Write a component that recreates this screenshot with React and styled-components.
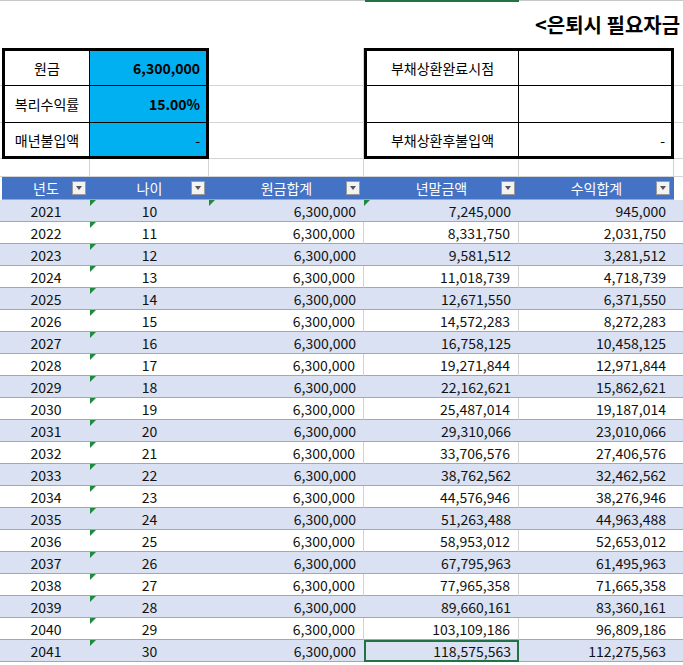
import React from "react";
import styled, { createGlobalStyle } from "styled-components";

const G = createGlobalStyle`
  body{margin:0;background:#fff;font-family:"Noto Sans CJK KR","Noto Sans",sans-serif;overflow:hidden;}
`;
const COLS = "2px 88px 119px 155px 155px 155px 9px";
const Sheet = styled.div`width:683px;height:665px;position:relative;overflow:hidden;`;
const TopLine = styled.div`height:1px;background:#c8c8c8;position:relative;`;
const Sel = styled.div`position:absolute;left:365px;width:154px;top:0;height:2px;background:#217346;`;
const TitleRow = styled.div`height:47px;display:flex;align-items:center;padding-left:535px;
  font-weight:700;font-size:20px;white-space:nowrap;color:#000;`;
const Grid = styled.div`display:grid;grid-template-columns:${COLS};`;
const Cell = styled.div`
  height:${p => p.h}px;box-sizing:border-box;display:flex;align-items:center;
  justify-content:${p => p.align || "center"};padding:0 6px;font-size:14px;color:#000;
  background:${p => p.bg || "transparent"};font-weight:${p => p.bold ? 700 : 400};
  border-right:${p => p.br || "1px solid #d4d4d4"};border-bottom:${p => p.bb || "1px solid #d4d4d4"};
  border-left:${p => p.bl || "none"};border-top:${p => p.bt || "none"};
  position:relative;white-space:nowrap;
`;
const Tri = styled.span`position:absolute;left:0;top:0;width:0;height:0;
  border-top:6px solid #1e8a3a;border-right:6px solid transparent;`;
const HeadCell = styled.div`height:23px;background:#4472c4;color:#fff;font-size:14px;display:flex;
  align-items:center;justify-content:center;position:relative;border-bottom:1px solid #8ea9db;box-sizing:border-box;`;
const Drop = styled.span`position:absolute;right:4px;top:4px;width:14px;height:14px;background:#f3f3f3;
  border:1px solid #9a9a9a;box-sizing:border-box;display:flex;align-items:center;justify-content:center;
  &:after{content:"";border-top:4px solid #555;border-left:3px solid transparent;border-right:3px solid transparent;}`;
const Row = styled.div`display:grid;grid-template-columns:${COLS};background:${p => p.alt ? "#d9e1f2" : "#fff"};`;
const D = styled.div`height:22px;box-sizing:border-box;border-bottom:1px solid #8ea9db;display:flex;align-items:center;
  justify-content:${p => p.align};padding:0 8px;font-size:14px;position:relative;color:#111;
  border-right:${p => p.sep ? "1px solid #d4d4d4" : "none"};
  outline:${p => p.sel ? "2px solid #217346" : "none"};outline-offset:-2px;`;

const fmt = n => n.toLocaleString("en-US");
const rows = [];
let v = 6300000;
for (let i = 0; i < 21; i++) {
  v = v * 1.15;
  const e = Math.round(v);
  rows.push([2021 + i, 10 + i, e, e - 6300000]);
}
const K = "3px solid #000";
const T = "1px solid #000";

export default function App() {
  return (
    <Sheet>
      <G />
      <TopLine><Sel /></TopLine>
      <TitleRow>&lt;은퇴시 필요자금</TitleRow>
      <Grid>
        <Cell h={38} br="none" />
        <Cell h={38} bt={K} bl={K} br={T} bb={T}>원금</Cell>
        <Cell h={38} bt={K} br={K} bb={T} bg="#00b0f0" align="flex-end" bold>6,300,000</Cell>
        <Cell h={38} />
        <Cell h={38} bt={K} bl={K} br={T} bb={T}>부채상환완료시점</Cell>
        <Cell h={38} bt={K} br={K} bb={T} />
        <Cell h={38} br="none" />

        <Cell h={37} br="none" />
        <Cell h={37} bl={K} br={T} bb={T}>복리수익률</Cell>
        <Cell h={37} br={K} bb={T} bg="#00b0f0" align="flex-end" bold>15.00%</Cell>
        <Cell h={37} />
        <Cell h={37} bl={K} br={T} bb={T} />
        <Cell h={37} br={K} bb={T} />
        <Cell h={37} br="none" />

        <Cell h={36} br="none" />
        <Cell h={36} bl={K} br={T} bb={K}>매년불입액</Cell>
        <Cell h={36} br={K} bb={K} bg="#00b0f0" align="flex-end">-</Cell>
        <Cell h={36} />
        <Cell h={36} bl={K} br={T} bb={K}>부채상환후불입액</Cell>
        <Cell h={36} br={K} bb={K} align="flex-end">-</Cell>
        <Cell h={36} br="none" />

        <Cell h={18} br="none" />
        <Cell h={18} /><Cell h={18} /><Cell h={18} /><Cell h={18} /><Cell h={18} /><Cell h={18} br="none" />
      </Grid>
      <Grid>
        <div />
        {["년도", "나이", "원금합계", "년말금액", "수익합계"].map(h => (
          <HeadCell key={h}>{h}<Drop /></HeadCell>
        ))}
        <div />
      </Grid>
      {rows.map((r, i) => (
        <Row key={r[0]} alt={i % 2 === 0}>
          <D align="center" />
          <D align="center">{r[0]}</D>
          <D align="center"><Tri />{r[1]}</D>
          <D align="flex-end" sep={i % 2 === 1}>{i === 0 && <Tri />}6,300,000</D>
          <D align="flex-end" sel={i === 20} sep={i % 2 === 1}>{i === 0 && <Tri />}{fmt(r[2])}</D>
          <D align="flex-end">{fmt(r[3])}</D>
          <D align="center" />
        </Row>
      ))}
    </Sheet>
  );
}
